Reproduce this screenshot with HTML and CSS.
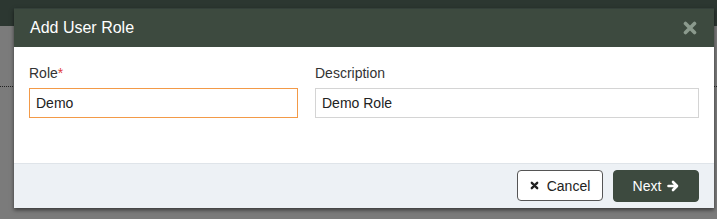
FILE: index.html
```html
<!DOCTYPE html>
<html>
<head>
<meta charset="utf-8">
<link rel="stylesheet" href="styles.css">
</head>
<body>
<div class="page">
  <div class="topbar"></div>
  <div class="content"><div class="dots"></div></div>
</div>
<div class="modal">
  <div class="modal-header">
    <span class="modal-title">Add User Role</span>
    <svg class="close" viewBox="0 0 14 14" width="14" height="14"><path d="M2.5 2.5L11.5 11.5M11.5 2.5L2.5 11.5" stroke="#8b9a8d" stroke-width="3.6" stroke-linecap="round"/></svg>
  </div>
  <div class="modal-body">
    <div class="field">
      <label class="label">Role<span class="req">*</span></label>
      <div class="input focused">Demo</div>
    </div>
    <div class="field">
      <label class="label">Description</label>
      <div class="input">Demo Role</div>
    </div>
  </div>
  <div class="modal-footer">
    <button class="btn btn-cancel"><svg class="ico" viewBox="0 0 10 10" width="9" height="9"><path d="M2 2L8 8M8 2L2 8" stroke="#222" stroke-width="2.6" stroke-linecap="round"/></svg>Cancel</button>
    <button class="btn btn-next">Next<svg class="ico-r" viewBox="0 0 12 12" width="12" height="12"><path d="M1.5 6H9.5M6 2L10 6L6 10" stroke="#fff" stroke-width="2.6" fill="none" stroke-linecap="round" stroke-linejoin="round"/></svg></button>
  </div>
</div>
</body>
</html>
```
FILE: styles.css
```css
html, body {
  margin: 0;
  padding: 0;
}
body {
  width: 717px;
  height: 219px;
  overflow: hidden;
  position: relative;
  font-family: "Liberation Sans", Arial, sans-serif;
  background: #7a7a7a;
}
.page {
  display: flex;
  flex-direction: column;
  height: 219px;
}
.topbar {
  height: 26px;
  background: #2c3731;
}
.content {
  flex: 1;
  background: #7b7b7b;
  padding-top: 60px;
}
.dots {
  border-top: 1px dotted #222;
}
.modal {
  position: absolute;
  left: 14px;
  top: 8px;
  width: 700px;
  background: #fff;
  box-shadow: 0 2px 4px rgba(0,0,0,0.55);
}
.modal-header {
  height: 39px;
  background: #3d4a3f;
  display: flex;
  align-items: center;
  justify-content: space-between;
  padding: 0 17px 0 16px;
  border-top: 1px solid #34403a;
  box-sizing: border-box;
}
.modal-title {
  color: #fff;
  font-size: 16px;
}
.close {
  display: block;
  margin-top: 0px;
}
.modal-body {
  display: grid;
  grid-template-columns: 269px 1fr;
  column-gap: 17px;
  padding: 16px 15px 45px 15px;
}
.label {
  display: block;
  font-size: 14px;
  line-height: 20px;
  color: #333;
  margin-bottom: 5px;
}
.req {
  color: #e23a3a;
}
.input {
  height: 30px;
  box-sizing: border-box;
  border: 1px solid #d4d4d4;
  padding: 0 6px;
  font-size: 14px;
  line-height: 28px;
  color: #222;
}
.input.focused {
  border-color: #f39a48;
}
.modal-footer {
  border-top: 1px solid #dfe4e9;
  background: #edf1f5;
  padding: 6px 15px 6px 15px;
  display: flex;
  justify-content: flex-end;
  gap: 10px;
}
.btn {
  height: 32px;
  box-sizing: border-box;
  font-family: "Liberation Sans", Arial, sans-serif;
  font-size: 14px;
  border-radius: 4px;
  display: flex;
  align-items: center;
  justify-content: center;
  padding: 0;
}
.btn-cancel {
  width: 86px;
  height: 31px;
  background: #fff;
  border: 1px solid #555;
  color: #222;
  gap: 8px;
}
.btn-next {
  width: 86px;
  background: #3d4a3f;
  border: 1px solid #3d4a3f;
  color: #fff;
  gap: 6px;
}
.ico, .ico-r {
  display: block;
}
```
